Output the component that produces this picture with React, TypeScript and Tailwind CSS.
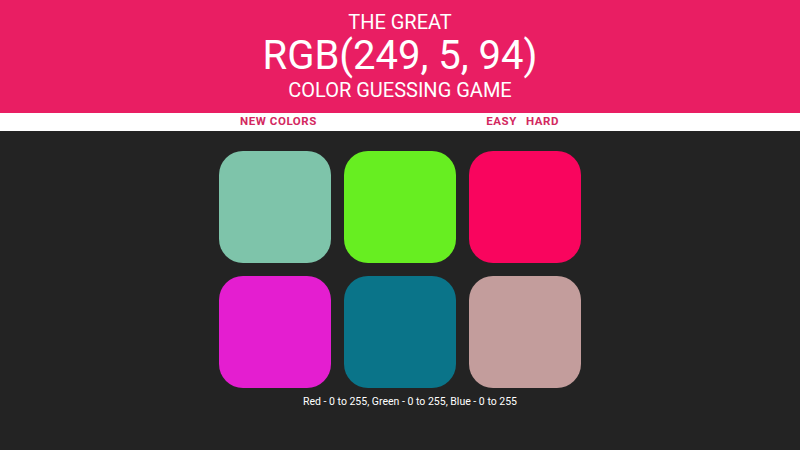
const colors = [
  "rgb(126, 196, 170)",
  "rgb(103, 238, 33)",
  "rgb(249, 5, 94)",
  "rgb(228, 30, 208)",
  "rgb(10, 116, 137)",
  "rgb(195, 157, 156)",
];

export default function App() {
  return (
    <main className="w-[800px] h-[450px] bg-[#232323] flex flex-col font-['Roboto',sans-serif] overflow-hidden">
      <header className="h-[113px] bg-[#e91e63] text-white flex flex-col items-center pt-[10px]">
        <h3 className="text-[20px] leading-[24px] uppercase">The Great</h3>
        <h1 className="text-[40px] leading-[44px]">RGB(249, 5, 94)</h1>
        <h3 className="text-[20px] leading-[24px] uppercase">Color Guessing Game</h3>
      </header>

      <nav className="h-[18px] bg-white flex items-center text-[11.5px] font-bold tracking-wider text-[#d3285f]">
        <button className="ml-[240px] uppercase">New Colors</button>
        <div className="ml-auto mr-[241px] flex gap-[9px]">
          <button className="uppercase">Easy</button>
          <button className="uppercase">Hard</button>
        </div>
      </nav>

      <section className="mt-[20px] mx-auto grid grid-cols-3 gap-[13px]">
        {colors.map((c) => (
          <div key={c} className="w-[112px] h-[112px] rounded-[24px]" style={{ backgroundColor: c }} />
        ))}
      </section>

      <p className="mt-[6px] pl-[20px] text-center text-[10.5px] text-white">
        Red - 0 to 255, Green - 0 to 255, Blue - 0 to 255
      </p>
    </main>
  );
}
